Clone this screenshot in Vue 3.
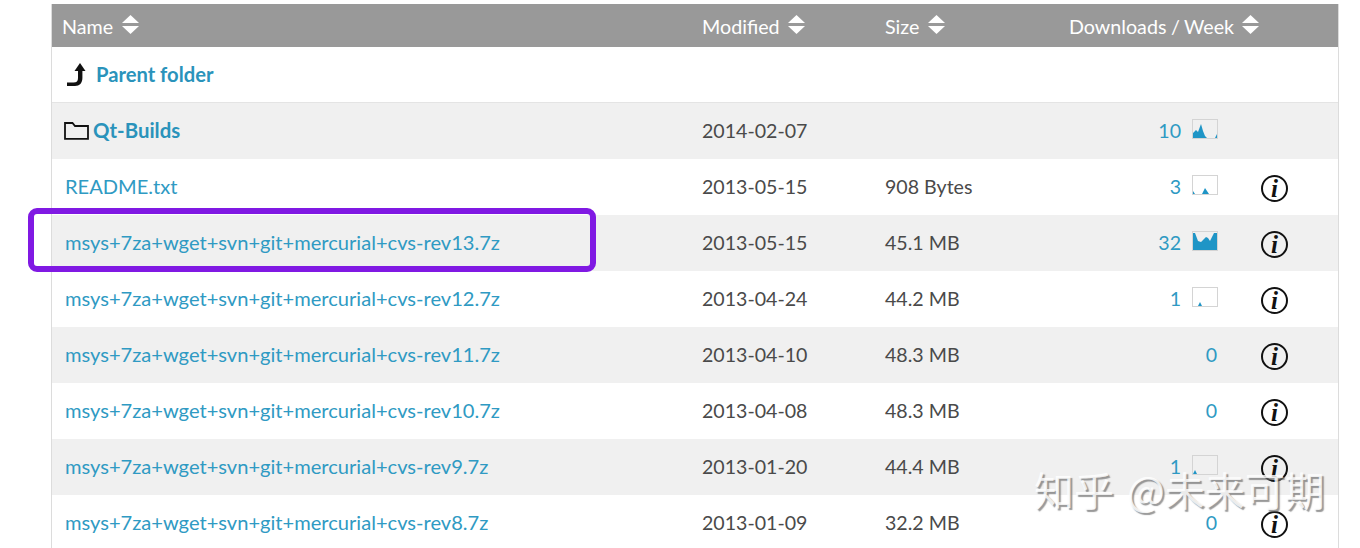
<script setup>
const headers = [
  { label: 'Name', cls: 'c-name' },
  { label: 'Modified', cls: 'c-mod' },
  { label: 'Size', cls: 'c-size' },
  { label: 'Downloads / Week', cls: 'c-dl' }
]
const rows = [
  { name: 'Qt-Builds', folder: true, date: '2014-02-07', size: '', dl: '10', spark: 'M1 19V14L4 11L6 13L9 5L11 12L13 17L15 19Z M23 19L25 15V19Z', info: false },
  { name: 'README.txt', date: '2013-05-15', size: '908 Bytes', dl: '3', spark: 'M1 19V16L3 19Z M10 19L13 13L17 19Z', info: true },
  { name: 'msys+7za+wget+svn+git+mercurial+cvs-rev13.7z', date: '2013-05-15', size: '45.1 MB', dl: '32', spark: 'M1 19V2H3L6 10L9 11L12 8L14 6L16 7L18 10L20 6L22 2H25V19Z', info: true },
  { name: 'msys+7za+wget+svn+git+mercurial+cvs-rev12.7z', date: '2013-04-24', size: '44.2 MB', dl: '1', spark: 'M6 19L8 15L10 19Z', info: true },
  { name: 'msys+7za+wget+svn+git+mercurial+cvs-rev11.7z', date: '2013-04-10', size: '48.3 MB', dl: '0', info: true },
  { name: 'msys+7za+wget+svn+git+mercurial+cvs-rev10.7z', date: '2013-04-08', size: '48.3 MB', dl: '0', info: true },
  { name: 'msys+7za+wget+svn+git+mercurial+cvs-rev9.7z', date: '2013-01-20', size: '44.4 MB', dl: '1', spark: 'M1 19L3 15L5 19Z', info: true },
  { name: 'msys+7za+wget+svn+git+mercurial+cvs-rev8.7z', date: '2013-01-09', size: '32.2 MB', dl: '0', info: true }
]
</script>

<template>
  <div class="page">
    <div class="table">
      <div class="head">
        <div v-for="h in headers" :key="h.label" class="th" :class="h.cls">
          <span>{{ h.label }}</span>
          <svg class="sort" width="17" height="19" viewBox="0 0 17 19"><path d="M8.5 0L17 8H0Z M0 11H17L8.5 19Z" fill="#fff" /></svg>
        </div>
      </div>
      <div class="row parent">
        <div class="c-name parent-cell">
          <svg class="up" width="20" height="25" viewBox="0 0 20 25"><path d="M14 1L19.5 9H16.4V16C16.4 21 13.5 24 9 24H1V20.6H7.5C10.8 20.6 12 19 12 16V9H8.5Z" fill="#111" /></svg>
          <a class="link strong">Parent folder</a>
        </div>
      </div>
      <div v-for="r in rows" :key="r.name" class="row">
        <div class="c-name name-cell">
          <svg v-if="r.folder" class="folder" width="25" height="19" viewBox="0 0 25 19"><path d="M1 17.8V2H8.5L11 5H24V17.8Z" fill="none" stroke="#111" stroke-width="1.8" /></svg>
          <a class="link" :class="{ strong: r.folder, qt: r.folder }">{{ r.name }}</a>
        </div>
        <div class="c-mod cell-text">{{ r.date }}</div>
        <div class="c-size cell-text">{{ r.size }}</div>
        <div class="c-dl dl-cell">
          <a class="link dl-num">{{ r.dl }}</a>
          <svg v-if="r.spark" class="spark" width="26" height="20" viewBox="0 0 26 20">
            <rect x="0.5" y="0.5" width="25" height="19" fill="none" stroke="#d4d4d4" />
            <path :d="r.spark" fill="#1f95c6" />
          </svg>
        </div>
        <div class="c-info">
          <span v-if="r.info" class="info">i</span>
        </div>
      </div>
    </div>
    <div class="mark"></div>
    <div class="wm">知乎 @未来可期</div>
  </div>
</template>

<style>
html, body { margin: 0; background: #fff; overflow: hidden; }
</style>

<style scoped>
.page {
  position: relative;
  width: 1360px;
  height: 548px;
  overflow: hidden;
  padding: 4px 0 0 51px;
  box-sizing: border-box;
  font-family: Lato, "Noto Sans", sans-serif;
  font-size: 19.6px;
  color: #4a4a4a;
}
.table {
  width: 1288px;
  box-sizing: border-box;
  border-left: 1px solid #dcdcdc;
  border-right: 1px solid #dcdcdc;
}
.head {
  display: flex;
  align-items: center;
  height: 43px;
  background: #999;
  color: #fff;
  font-size: 19.7px;
}
.th { display: flex; align-items: center; gap: 8px; padding-top: 2px; box-sizing: border-box; }
.th span { white-space: nowrap; }
.th.c-name { padding-left: 10px; gap: 9px; }
.th.c-size { gap: 9px; }
.th.c-dl span { word-spacing: -0.6px; }
.sort { flex: none; margin-top: -4px; }
.row {
  display: flex;
  align-items: center;
  height: 56px;
  box-sizing: border-box;
  padding-bottom: 2px;
}
.row:nth-child(odd) { background: #f0f0f0; }
.row.parent { height: 56px; border-bottom: 1px solid #e4e4e4; }
.c-name { width: 638px; flex: none; box-sizing: border-box; padding-left: 12px; }
.c-mod { width: 183px; flex: none; box-sizing: border-box; padding-left: 12px; }
.c-size { width: 184px; flex: none; box-sizing: border-box; padding-left: 12px; }
.c-dl { width: 281px; flex: none; box-sizing: border-box; padding-left: 12px; }
.row .c-dl { width: 160px; padding-left: 0; }
.row .c-info { width: 121px; flex: none; box-sizing: border-box; padding-left: 44px; display: flex; }
.name-cell { display: flex; align-items: center; gap: 4px; padding-left: 13px; font-size: 20.1px; }
.name-cell:has(.folder) { padding-left: 12px; }
.parent-cell { display: flex; align-items: center; gap: 10px; padding-left: 14px; }
.up { flex: none; margin-top: 1px; }
.folder { flex: none; }
.link { color: #2f9ac3; }
.strong { font-weight: 700; font-size: 20.2px; color: #2a93bb; }
.qt { font-size: 20.4px; }
.dl-cell { display: flex; align-items: center; justify-content: flex-end; gap: 11px; }
.spark { flex: none; margin-top: -2px; margin-right: -1px; }
.info {
  width: 27px;
  height: 27px;
  box-sizing: border-box;
  border: 2.6px solid #111;
  border-radius: 50%;
  display: flex;
  align-items: center;
  justify-content: center;
  font-family: "Liberation Serif", serif;
  font-style: italic;
  font-weight: 700;
  font-size: 25px;
  line-height: 1;
  color: #111;
  margin-top: 4px;
}
.mark {
  position: absolute;
  left: 28px;
  top: 208px;
  width: 568px;
  height: 64px;
  box-sizing: border-box;
  border: 6px solid #8019e3;
  border-radius: 9px;
}
.wm {
  position: absolute;
  left: 1034px;
  top: 461px;
  font-family: "Noto Sans CJK SC", sans-serif;
  font-size: 40px;
  word-spacing: 4px;
  line-height: 56px;
  white-space: nowrap;
  color: rgba(255, 255, 255, 0.82);
  text-shadow: 2px 2px 1px rgba(110, 110, 110, 0.7);
}
</style>
